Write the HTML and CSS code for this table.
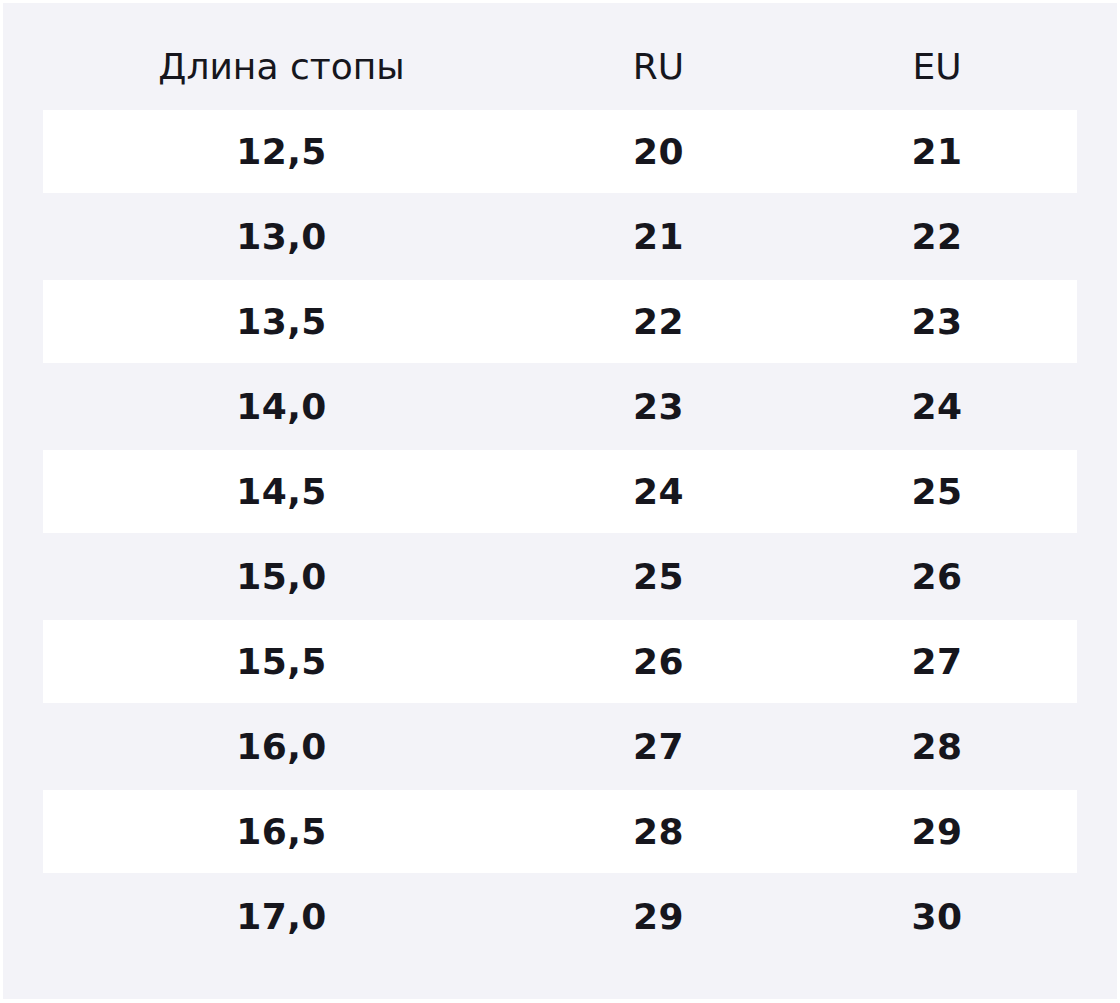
FILE: index.html
```html
<!DOCTYPE html>
<html lang="ru">
<head>
<meta charset="utf-8">
<title>Таблица размеров</title>
<link rel="stylesheet" href="styles.css">
</head>
<body>
<div class="panel">
  <div class="table">
    <div class="row head"><div>Длина стопы</div><div>RU</div><div>EU</div></div>
    <div class="row alt"><div>12,5</div><div>20</div><div>21</div></div>
    <div class="row"><div>13,0</div><div>21</div><div>22</div></div>
    <div class="row alt"><div>13,5</div><div>22</div><div>23</div></div>
    <div class="row"><div>14,0</div><div>23</div><div>24</div></div>
    <div class="row alt"><div>14,5</div><div>24</div><div>25</div></div>
    <div class="row"><div>15,0</div><div>25</div><div>26</div></div>
    <div class="row alt"><div>15,5</div><div>26</div><div>27</div></div>
    <div class="row"><div>16,0</div><div>27</div><div>28</div></div>
    <div class="row alt"><div>16,5</div><div>28</div><div>29</div></div>
    <div class="row"><div>17,0</div><div>29</div><div>30</div></div>
  </div>
</div>
</body>
</html>
```
FILE: styles.css
```css
html, body {
  margin: 0;
  background: #ffffff;
}
body {
  padding: 3px;
  font-family: "DejaVu Sans", "Noto Sans", sans-serif;
  color: #16161d;
}
.panel {
  width: 1114px;
  height: 996px;
  box-sizing: border-box;
  background: #f3f3f8;
  padding: 21px 40px 40px;
}
.table {
  display: flex;
  flex-direction: column;
}
.row {
  display: grid;
  grid-template-columns: 477px 277px 1fr;
  height: 85px;
  box-sizing: border-box;
  align-items: center;
  text-align: center;
  font-size: 36px;
  font-weight: bold;
  letter-spacing: 0.4px;
}
.row.head {
  font-weight: normal;
  letter-spacing: 0;
}
.row.alt {
  background: #ffffff;
  border-top: 1px solid #f3f3f8;
  border-bottom: 1px solid #f3f3f8;
}
```
